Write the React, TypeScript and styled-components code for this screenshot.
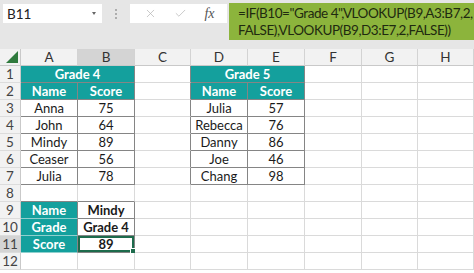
import React from 'react';
import styled, { createGlobalStyle } from 'styled-components';
import { X, Check } from 'lucide-react';

const GlobalStyle = createGlobalStyle`
  body {
    margin: 0;
    background: #fff;
    font-family: Lato, "Open Sans", sans-serif;
  }
`;

type Kind = 'plain' | 'title' | 'head' | 'label' | 'data' | 'value';

interface CellDef {
  text: string;
  kind: Kind;
  span?: number;
}

const COLS = ['A', 'B', 'C', 'D', 'E', 'F', 'G', 'H'];
const WIDTHS = [57, 57, 56, 57, 57, 57, 56, 56];
const ROWS = 12;
const GRID = '#dadada';
const EDGE = '#858585';
const TEAL = '#14a09d';

const cells: Record<string, CellDef> = {
  A1: { text: 'Grade 4', kind: 'title', span: 2 },
  D1: { text: 'Grade 5', kind: 'title', span: 2 },
  A2: { text: 'Name', kind: 'head' },
  B2: { text: 'Score', kind: 'head' },
  D2: { text: 'Name', kind: 'head' },
  E2: { text: 'Score', kind: 'head' },
  A9: { text: 'Name', kind: 'label' },
  A10: { text: 'Grade', kind: 'label' },
  A11: { text: 'Score', kind: 'label' },
  B9: { text: 'Mindy', kind: 'value' },
  B10: { text: 'Grade 4', kind: 'value' },
  B11: { text: '89', kind: 'value' },
};

const grade4 = [['Anna', '75'], ['John', '64'], ['Mindy', '89'], ['Ceaser', '56'], ['Julia', '78']];
const grade5 = [['Julia', '57'], ['Rebecca', '76'], ['Danny', '86'], ['Joe', '46'], ['Chang', '98']];
grade4.forEach(([n, s], i) => {
  cells[`A${i + 3}`] = { text: n, kind: 'data' };
  cells[`B${i + 3}`] = { text: s, kind: 'data' };
});
grade5.forEach(([n, s], i) => {
  cells[`D${i + 3}`] = { text: n, kind: 'data' };
  cells[`E${i + 3}`] = { text: s, kind: 'data' };
});

// cells hidden under a merge
const covered = new Set(['B1', 'E1']);
const SELECTED = 'B11';

const edgeRight = (ref: string, kind: Kind) => {
  if (kind !== 'plain') return EDGE;
  const col = ref[0];
  const row = Number(ref.slice(1));
  if (col === 'C' && row <= 7) return EDGE;
  return GRID;
};

const edgeBottom = (ref: string, kind: Kind) => {
  if (kind === 'label') return '#8fd0ce';
  if (kind !== 'plain') return EDGE;
  if ((ref === 'A8' || ref === 'B8')) return EDGE;
  return GRID;
};

const App = () => {
  return (
    <Page>
      <GlobalStyle />
      <Toolbar>
        <NameBox>
          <span>B11</span>
          <Caret />
        </NameBox>
        <Grip>
          <svg width="4" height="12" viewBox="0 0 4 12">
            <circle cx="2" cy="2" r="1" fill="#9a9a9a" />
            <circle cx="2" cy="6" r="1" fill="#9a9a9a" />
            <circle cx="2" cy="10" r="1" fill="#9a9a9a" />
          </svg>
        </Grip>
        <FxBox>
          <X size={13} strokeWidth={1.3} color="#b3b3b3" />
          <Check size={13} strokeWidth={1.3} color="#b3b3b3" />
          <Fx>fx</Fx>
        </FxBox>
        <Formula>
          =IF(B10="Grade 4",VLOOKUP(B9,A3:B7,2,
          <br />
          FALSE),VLOOKUP(B9,D3:E7,2,FALSE))
        </Formula>
      </Toolbar>
      <Sheet>
        <Corner>
          <svg width="12" height="12" viewBox="0 0 12 12">
            <polygon points="12,0 12,12 0,12" fill="#2f7a3d" />
          </svg>
        </Corner>
        {COLS.map((c) => (
          <ColHead key={c} $active={c === 'B'}>{c}</ColHead>
        ))}
        {Array.from({ length: ROWS }, (_, r) => {
          const row = r + 1;
          return (
            <React.Fragment key={row}>
              <RowHead $active={row === 11}>{row}</RowHead>
              {COLS.map((c) => {
                const ref = `${c}${row}`;
                if (covered.has(ref)) return null;
                const def = cells[ref] ?? { text: '', kind: 'plain' as Kind };
                return (
                  <Cell
                    key={ref}
                    $kind={def.kind}
                    $span={def.span}
                    $right={edgeRight(ref, def.kind)}
                    $bottom={edgeBottom(ref, def.kind)}
                    $selected={ref === SELECTED}
                  >
                    {def.text}
                  </Cell>
                );
              })}
            </React.Fragment>
          );
        })}
      </Sheet>
    </Page>
  );
};

const Page = styled.div`
  width: 474px;
  height: 273px;
  overflow: hidden;
  background: #fff;
`;

const Toolbar = styled.div`
  display: flex;
  align-items: flex-start;
  height: 49px;
  box-sizing: border-box;
  padding: 4px 0 0 3px;
  background: #e6e6e6;
`;

const NameBox = styled.div`
  display: flex;
  align-items: center;
  justify-content: space-between;
  width: 99px;
  height: 19px;
  box-sizing: border-box;
  padding: 0 6px 0 4px;
  background: #fff;
  font-size: 13.5px;
  color: #222;
`;

const Caret = styled.span`
  width: 0;
  height: 0;
  border-left: 2.5px solid transparent;
  border-right: 2.5px solid transparent;
  border-top: 3px solid #666;
`;

const Grip = styled.div`
  display: flex;
  justify-content: center;
  align-items: center;
  width: 28px;
  height: 19px;
`;

const FxBox = styled.div`
  display: flex;
  align-items: center;
  justify-content: space-around;
  width: 97px;
  height: 19px;
  box-sizing: border-box;
  padding: 0 4px 0 6px;
  background: #fff;
`;

const Fx = styled.span`
  font-family: "Liberation Serif", serif;
  font-style: italic;
  font-size: 14px;
  color: #555;
`;

const Formula = styled.div`
  flex: 1;
  height: 37px;
  margin: -1px 0 0 2px;
  box-sizing: border-box;
  padding: 2px 0 0 9px;
  background: #8cb43c;
  font-size: 13.5px;
  letter-spacing: -0.45px;
  line-height: 17px;
  color: #1f2a10;
  white-space: nowrap;
`;

const Sheet = styled.div`
  display: grid;
  grid-template-columns: 21px ${WIDTHS.map((w) => `${w}px`).join(' ')};
  grid-auto-rows: 17px;
  font-size: 13px;
`;

const Corner = styled.div`
  display: flex;
  align-items: flex-end;
  justify-content: flex-end;
  padding: 0 2px 2px 0;
  background: #f2f2f2;
  border-right: 1px solid #c9c9c9;
  border-bottom: 1px solid #c9c9c9;
`;

const ColHead = styled.div<{ $active?: boolean }>`
  display: flex;
  align-items: center;
  justify-content: center;
  background: ${({ $active }) => ($active ? '#d4d4d4' : '#f2f2f2')};
  border-right: 1px solid #d3d3d3;
  border-bottom: 1px solid #c9c9c9;
  color: #333;
  font-size: 13.5px;
`;

const RowHead = styled.div<{ $active?: boolean }>`
  display: flex;
  align-items: center;
  justify-content: center;
  background: ${({ $active }) => ($active ? '#d4d4d4' : '#f2f2f2')};
  border-right: 1px solid #c9c9c9;
  border-bottom: 1px solid #dcdcdc;
  color: #444;
  font-size: 13.5px;
`;

const Cell = styled.div<{
  $kind: Kind;
  $span?: number;
  $right: string;
  $bottom: string;
  $selected?: boolean;
}>`
  position: relative;
  grid-column: span ${({ $span }) => $span ?? 1};
  display: flex;
  align-items: center;
  justify-content: center;
  border-right: 1px solid ${({ $right }) => $right};
  border-bottom: 1px solid ${({ $bottom }) => $bottom};
  white-space: nowrap;
  background: ${({ $kind }) => (['title', 'head', 'label'].includes($kind) ? TEAL : '#fff')};
  color: ${({ $kind }) => (['title', 'head', 'label'].includes($kind) ? '#fff' : '#1a1a1a')};
  font-weight: ${({ $kind }) => ($kind === 'data' || $kind === 'plain' ? 400 : 700)};
  box-shadow: ${({ $selected }) => ($selected ? 'inset 0 0 0 2px #1d6b4c' : 'none')};

  &::after {
    content: '';
    display: ${({ $selected }) => ($selected ? 'block' : 'none')};
    position: absolute;
    right: -3px;
    bottom: -3px;
    width: 5px;
    height: 5px;
    background: #1d6b4c;
    border: 1px solid #fff;
  }
`;

export default App;
